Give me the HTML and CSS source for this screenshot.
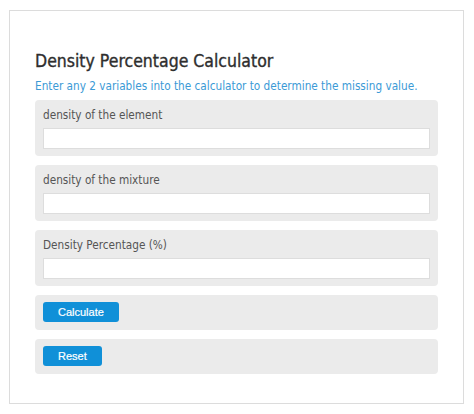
FILE: index.html
```html
<!DOCTYPE html>
<html>
<head>
<meta charset="utf-8">
<link rel="stylesheet" href="styles.css">
</head>
<body>
<div class="calc">
  <h1 class="title">Density Percentage Calculator</h1>
  <p class="subtitle">Enter any 2 variables into the calculator to determine the missing value.</p>
  <div class="rows">
    <div class="row">
      <label class="label">density of the element</label>
      <input class="field" type="text">
    </div>
    <div class="row">
      <label class="label">density of the mixture</label>
      <input class="field" type="text">
    </div>
    <div class="row">
      <label class="label">Density Percentage (%)</label>
      <input class="field" type="text">
    </div>
    <div class="row row-btn">
      <button class="btn" type="button">Calculate</button>
    </div>
    <div class="row row-btn">
      <button class="btn" type="button">Reset</button>
    </div>
  </div>
</div>
</body>
</html>
```
FILE: styles.css
```css
html, body {
  margin: 0;
  padding: 0;
  background: #fff;
}
body {
  font-family: "DejaVu Sans Condensed", "DejaVu Sans", sans-serif;
}
.calc {
  box-sizing: border-box;
  margin: 10px 0 0 9px;
  width: 455px;
  height: 394px;
  border: 1px solid #dcdcdc;
  padding: 38px 25px 0 25px;
}
.title {
  margin: 0 0 4px 0;
  font-size: 17.5px;
  line-height: 24px;
  font-weight: 400;
  color: #2e2e2e;
  -webkit-text-stroke: 0.35px #2e2e2e;
}
.subtitle {
  margin: 0 0 5px 0;
  font-size: 11.7px;
  line-height: 18px;
  color: #3b9ad6;
}
.rows {
  display: flex;
  flex-direction: column;
  gap: 9px;
}
.row {
  background: #ebebeb;
  border-radius: 4px;
  padding: 6px 8px 7px 8px;
  display: flex;
  flex-direction: column;
}
.label {
  font-size: 11.7px;
  line-height: 18px;
  color: #555;
  margin-bottom: 4px;
}
.field {
  box-sizing: border-box;
  height: 21px;
  width: 100%;
  margin: 0;
  border: 1px solid #ddd;
  background: #fff;
  padding: 0 4px;
  outline: none;
}
.row-btn {
  padding: 7px 8px 8px 8px;
  align-items: flex-start;
}
.btn {
  height: 20px;
  margin: 0;
  padding: 0 15px;
  border: none;
  border-radius: 3px;
  background: #1090d8;
  color: #fff;
  font-family: "Liberation Sans", Arial, sans-serif;
  font-size: 11px;
  line-height: 20px;
  -webkit-text-stroke: 0.2px #fff;
}
```
